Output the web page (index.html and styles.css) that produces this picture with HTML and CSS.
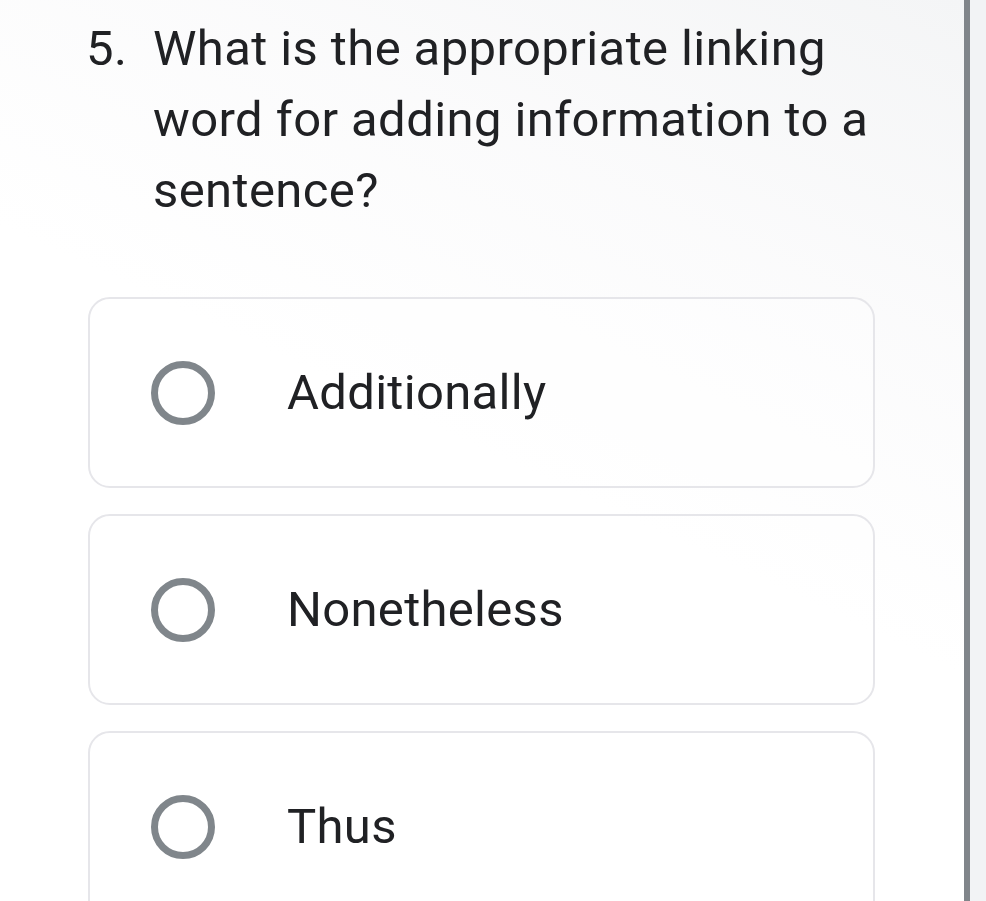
FILE: index.html
```html
<!DOCTYPE html>
<html lang="en">
<head>
<meta charset="utf-8">
<title>Question 5</title>
<link rel="stylesheet" href="styles.css">
</head>
<body>
<div class="page">
  <main class="content">
    <div class="question">
      <span class="qnum">5.</span>
      <span class="qtext">What is the appropriate linking word for adding information to a sentence?</span>
    </div>
    <div class="options">
      <label class="option">
        <span class="radio"></span>
        <span class="opt-text">Additionally</span>
      </label>
      <label class="option">
        <span class="radio"></span>
        <span class="opt-text">Nonetheless</span>
      </label>
      <label class="option">
        <span class="radio"></span>
        <span class="opt-text">Thus</span>
      </label>
    </div>
  </main>
  <div class="divider"></div>
  <div class="strip"></div>
</div>
</body>
</html>
```

FILE: styles.css
```css
html, body {
  margin: 0;
  padding: 0;
  height: 100%;
  overflow: hidden;
}
body {
  font-family: Roboto, "Liberation Sans", sans-serif;
  color: #202124;
  background: #ffffff;
}
.page {
  display: flex;
  height: 901px;
}
.content {
  width: 964px;
  flex: none;
  background:
    linear-gradient(205deg, #f4f5f6 0%, rgba(249,249,250,0.7) 25%, rgba(255,255,255,0) 50%),
    #ffffff;
  padding: 13px 0 0 88px;
  box-sizing: border-box;
}
.question {
  display: flex;
  width: 790px;
  margin-left: -2px;
  font-size: 49px;
  line-height: 71px;
  letter-spacing: 0.4px;
}
.qnum {
  width: 67px;
  flex: none;
}
.qtext {
  flex: 1;
}
.options {
  margin-top: 71px;
  display: flex;
  flex-direction: column;
  gap: 26px;
  width: 787px;
}
.option {
  display: flex;
  align-items: center;
  height: 191px;
  box-sizing: border-box;
  border: 2px solid #e6e6ea;
  border-radius: 22px;
  padding-left: 61px;
  background: rgba(255,255,255,0.4);
}
.radio {
  width: 64px;
  height: 64px;
  box-sizing: border-box;
  border: 7px solid #80868b;
  border-radius: 50%;
  flex: none;
}
.opt-text {
  margin-left: 72px;
  font-size: 49px;
  line-height: 60px;
  letter-spacing: 0.3px;
}
.divider {
  width: 6px;
  flex: none;
  background: #80858a;
}
.strip {
  flex: 1;
  background: #f2f3f5;
}
```
